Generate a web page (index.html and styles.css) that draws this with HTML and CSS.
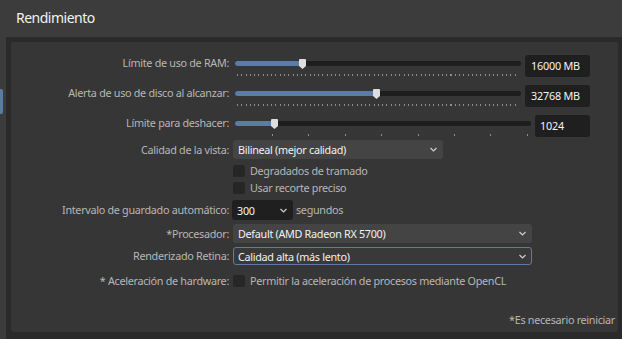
FILE: index.html
```html
<!DOCTYPE html>
<html lang="es">
<head>
<meta charset="utf-8">
<link rel="stylesheet" href="styles.css">
</head>
<body>
<div class="side-tab"></div>
<header class="title-bar"><h1 class="title">Rendimiento</h1></header>
<div class="frame">
  <section class="panel">
    <div class="row slider-row first">
      <label class="lbl">Límite de uso de RAM:</label>
      <div class="ctrl">
        <div class="slider">
          <div class="track"><div class="fill" style="width:67px"></div><span class="thumb" style="left:64px"></span></div>
          <div class="ticks dense"></div>
        </div>
        <div class="value">16000 MB</div>
      </div>
    </div>
    <div class="row slider-row">
      <label class="lbl">Alerta de uso de disco al alcanzar:</label>
      <div class="ctrl">
        <div class="slider">
          <div class="track"><div class="fill" style="width:141px"></div><span class="thumb" style="left:138px"></span></div>
          <div class="ticks dense"></div>
        </div>
        <div class="value">32768 MB</div>
      </div>
    </div>
    <div class="row slider-row">
      <label class="lbl">Límite para deshacer:</label>
      <div class="ctrl">
        <div class="slider">
          <div class="track"><div class="fill" style="width:39px"></div><span class="thumb" style="left:36px"></span></div>
          <div class="ticks sparse"></div>
        </div>
        <div class="value narrow">1024</div>
      </div>
    </div>
    <div class="row select-row quality">
      <label class="lbl">Calidad de la vista:</label>
      <div class="select light w-quality"><span>Bilineal (mejor calidad)</span><svg class="chev" width="7" height="5" viewBox="0 0 7 5"><polyline points="0.5,1 3.5,4 6.5,1" fill="none" stroke="#cfcfcf" stroke-width="1.2"/></svg></div>
    </div>
    <div class="row check-row c1">
      <span></span>
      <div class="check-line"><span class="box"></span><span class="check-text">Degradados de tramado</span></div>
    </div>
    <div class="row check-row c2">
      <span></span>
      <div class="check-line"><span class="box"></span><span class="check-text">Usar recorte preciso</span></div>
    </div>
    <div class="row select-row interval">
      <label class="lbl">Intervalo de guardado automático:</label>
      <div class="inline">
        <div class="select dark w-interval"><span>300</span><svg class="chev" width="7" height="5" viewBox="0 0 7 5"><polyline points="0.5,1 3.5,4 6.5,1" fill="none" stroke="#cfcfcf" stroke-width="1.2"/></svg></div>
        <span class="unit">segundos</span>
      </div>
    </div>
    <div class="row select-row proc">
      <label class="lbl">*Procesador:</label>
      <div class="select light w-wide"><span>Default (AMD Radeon RX 5700)</span><svg class="chev" width="7" height="5" viewBox="0 0 7 5"><polyline points="0.5,1 3.5,4 6.5,1" fill="none" stroke="#cfcfcf" stroke-width="1.2"/></svg></div>
    </div>
    <div class="row select-row retina">
      <label class="lbl">Renderizado Retina:</label>
      <div class="select focus w-wide"><span>Calidad alta (más lento)</span><svg class="chev" width="7" height="5" viewBox="0 0 7 5"><polyline points="0.5,1 3.5,4 6.5,1" fill="none" stroke="#cfcfcf" stroke-width="1.2"/></svg></div>
    </div>
    <div class="row check-row accel">
      <label class="lbl">* Aceleración de hardware:</label>
      <div class="check-line"><span class="box"></span><span class="check-text">Permitir la aceleración de procesos mediante OpenCL</span></div>
    </div>
    <p class="note">*Es necesario reiniciar</p>
  </section>
</div>
</body>
</html>
```

FILE: styles.css
```css
* { box-sizing: border-box; }
html, body { margin: 0; padding: 0; }
body {
  width: 622px;
  height: 339px;
  background: #3c3c3c;
  font-family: "Noto Sans", "Open Sans", sans-serif;
  font-size: 10.8px;
  letter-spacing: -0.3px;
  color: #b6b6b6;
  overflow: hidden;
  position: relative;
  display: flex;
  flex-direction: column;
}
.side-tab {
  position: absolute;
  left: 0;
  top: 89px;
  width: 3px;
  height: 25px;
  background: #5a7ba3;
  border-radius: 0 2px 2px 0;
}
.title-bar {
  height: 37px;
  padding-left: 16px;
  display: flex;
  align-items: center;
}
.title {
  margin: 0;
  font-size: 14px;
  font-weight: 400;
  letter-spacing: -0.5px;
  color: #f2f2f2;
  line-height: 18px;
  padding-bottom: 1px;
}
.frame {
  flex: 1;
  margin-left: 6px;
  background: #2a2a2a;
  padding: 5px 4px 7px 5px;
  display: flex;
}
.panel {
  flex: 1;
  background: #363636;
  border-radius: 3px;
  padding: 13px 3px 4px 0;
  display: flex;
  flex-direction: column;
}
.row {
  display: grid;
  grid-template-columns: 218px 1fr;
  column-gap: 4px;
  align-items: center;
}
.lbl {
  text-align: right;
  line-height: 16px;
  white-space: nowrap;
}
.slider-row { align-items: start; margin-top: 8px; height: 22px; }
.slider-row.first { margin-top: 0; }
.ctrl {
  display: flex;
  align-items: flex-start;
  padding-right: 25px;
}
.slider {
  flex: 1;
  padding-left: 2px;
  margin-right: 4px;
}
.track {
  position: relative;
  margin-top: 6px;
  height: 5px;
  background: #1e1e1e;
  border-radius: 3px;
}
.fill {
  height: 100%;
  background: #5b7ca6;
  border-radius: 3px 0 0 3px;
}
.thumb {
  position: absolute;
  top: -2px;
  width: 7px;
  height: 10px;
  background: #dedede;
  clip-path: polygon(0 0, 100% 0, 100% 70%, 50% 100%, 0 70%);
  border-radius: 1px;
}
.ticks {
  margin-top: 8px;
  height: 2px;
  margin-left: 2px;
  margin-right: 2px;
}
.ticks.dense {
  background: repeating-linear-gradient(to right, #8c8c8c 0 1px, transparent 1px 4.27px);
}
.ticks.sparse {
  background: repeating-linear-gradient(to right, #8c8c8c 0 1px, transparent 1px 36.4px);
  margin-left: 37px;
}
.value {
  width: 65px;
  height: 22px;
  background: #1f1f1f;
  border-radius: 3px;
  color: #f4f4f4;
  padding-left: 6px;
  line-height: 22px;
  letter-spacing: -0.2px;
}
.value.narrow { width: 55px; padding-left: 5px; }

.select {
  display: flex;
  align-items: center;
  justify-content: space-between;
  padding: 0 6px 0 5px;
  color: #f2f2f2;
  border-radius: 3px;
}
.select.light { background: #444444; }
.select.dark { background: #1f1f1f; }
.select.focus { background: #393939; border: 1px solid #5b7ca6; padding-left: 4px; padding-right: 5px; }
.chev { flex: none; }
.quality { margin-top: 3px; }
.w-quality { width: 210px; height: 19px; }
.interval { margin-top: 6px; }
.w-interval { width: 61px; height: 20px; margin-left: -1px; }
.inline { display: flex; align-items: center; gap: 3px; }
.proc { margin-top: 4px; }
.retina { margin-top: 4px; }
.w-wide { width: 299px; height: 19px; }
.retina .w-wide { height: 18px; }

.check-line { display: flex; align-items: center; gap: 5px; height: 12px; }
.box {
  width: 12px;
  height: 12px;
  background: #262626;
  border-radius: 2px;
  flex: none;
}
.check-text { line-height: 16px; white-space: nowrap; }
.c1 { margin-top: 6px; height: 12px; }
.c2 { margin-top: 5px; height: 12px; }
.accel { margin-top: 8px; height: 12px; }
.unit { line-height: 16px; }

.note {
  margin: auto 0 0 0;
  text-align: right;
  line-height: 16px;
}
```
